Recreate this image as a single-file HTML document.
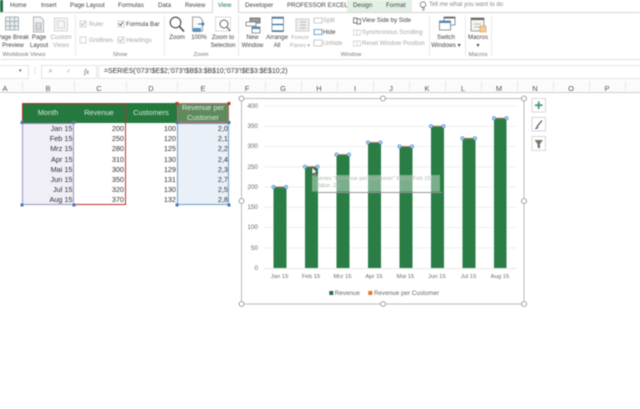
<!DOCTYPE html>
<html><head><meta charset="utf-8">
<style>
html,body{margin:0;padding:0;background:#fff}
#p{position:relative;width:640px;height:409px;overflow:hidden;background:#fff;font-family:"Liberation Sans",sans-serif;filter:blur(.45px)}
.t{position:absolute;white-space:nowrap;font-size:6.1px;line-height:8px;color:#444}
.c{transform:translateX(-50%);text-align:center}
.r{transform:translateX(-100%);text-align:right}
.g{color:#a8a8a8}
.b{position:absolute}
.tab{font-size:6.2px;line-height:9px;top:1px;color:#444}
.h{font-size:7.5px;line-height:9px;color:#555;top:83.5px}
.w{color:#d5ead9;font-size:7.4px;line-height:9px}
.d{font-size:7.3px;line-height:9px;color:#333}
.y{font-size:6.4px;line-height:9px;color:#6a6a6a}
.x{font-size:5.9px;line-height:9px;color:#6a6a6a;top:272.5px}
.l{font-size:5.8px;color:#777;line-height:9px;top:51px}
.o{line-height:9px}
</style></head><body><div id="p">
<div class="b" style="left:0;top:0;width:3px;height:13px;background:#217346"></div>
<div class="b" style="left:0;top:12px;width:640px;height:1px;background:#d4d4d4"></div>
<div class="b" style="left:212px;top:0;width:25px;height:13px;background:#fff;border:1px solid #d4d4d4;border-top:0;border-bottom:0"></div>
<div class="b" style="left:347px;top:0;width:65px;height:12px;background:#e3f0e5"></div>
<span class="t tab" style="left:10px">Home</span><span class="t tab" style="left:41px">Insert</span><span class="t tab" style="left:70px">Page Layout</span><span class="t tab" style="left:118px">Formulas</span><span class="t tab" style="left:158px">Data</span><span class="t tab" style="left:185px">Review</span><span class="t tab" style="left:218px;color:#217346">View</span><span class="t tab" style="left:245px">Developer</span><span class="t tab" style="left:287px">PROFESSOR EXCEL</span><span class="t tab" style="left:353px">Design</span><span class="t tab" style="left:386px">Format</span><span class="t tab g" style="left:429px;color:#888;font-size:6px">Tell me what you want to do</span>
<svg class="b" style="left:419px;top:1px" width="8" height="10"><circle cx="4" cy="3.6" r="2.8" fill="none" stroke="#777" stroke-width=".8"/><path d="M3 7h2v2H3" fill="none" stroke="#777" stroke-width=".8"/></svg>

<svg class="b" style="left:0;top:13px" width="640" height="47" fill="none">
<g stroke="#9aa3a8" stroke-width=".8"><path d="M5.500 4h13v13h-13zM10 4v13M14.500 4v13M5.500 8.500h13M5.500 13h13" fill="#e8eef0"/>
<path d="M33.500 4h7l3 3v12h-10z" fill="#f2f2f2"/><path d="M36 10h5v7h-5zM36 12.500h5M36 15h5"/>
<g stroke="#ccc"><path d="M54.500 5h13v13h-13z" fill="#f5f5f5"/><path d="M57.500 8h7v7h-7z"/></g></g>
<path d="M80 8h6v6h-6zM80 24h6v6h-6zM118 8h6v6h-6zM118 24h6v6h-6z" stroke="#c8c8c8" stroke-width=".8"/>
<path d="M119 10.500l1.500 2 2.500-3.500" stroke="#555" stroke-width=".9"/>
<path d="M81 10.500l1.500 2 2.500-3.500M119 26.500l1.500 2 2.500-3.500" stroke="#aaa" stroke-width=".8"/>
<circle cx="175.500" cy="9.500" r="5.300" stroke="#444" stroke-width="1.100"/><path d="M179.500 13.500l4.500 5" stroke="#444" stroke-width="1.500"/>
<path d="M192.500 4h7l3 3v11h-10z" stroke="#888" stroke-width=".8" fill="#fafafa"/><path d="M198 11h6M202 9l2 2-2 2" stroke="#2a74b8" stroke-width="1"/><path d="M193 15h8v4h-8z" fill="#5a93c4"/>
<path d="M215.500 4h15v14h-15z" stroke="#aaa" stroke-width=".7" stroke-dasharray="1.500 1"/><circle cx="224" cy="11" r="4" stroke="#666"/><path d="M227 14l3 4" stroke="#666" stroke-width="1.200"/>
<path d="M250 5h10v5h-10z" stroke="#666" stroke-width=".8" fill="#555" fill-opacity=".6"/><path d="M246 9h10v4h-10z" stroke="#777" stroke-width=".8" fill="#fff"/><path d="M252 14h8v6h-8z" stroke="#777" stroke-width=".8" fill="#fff"/><path d="M252 14h8v2h-8z" fill="#4a8bc0"/>
<path d="M272 4h11.500v14.500h-11.500z" stroke="#888" stroke-width=".8" fill="#fff"/><path d="M272 5h11.500M272 11.500h11.500M272 18h11.500" stroke="#2e6ea6" stroke-width="1.200"/>
<path d="M296 6h13v12h-13z" stroke="#ccc" fill="#eee"/><path d="M300 9h6M300 12h6M300 15h6" stroke="#bbb"/>
<path d="M314 5h8v5h-8z" stroke="#bbb" stroke-width=".8"/><path d="M314 16.500h8v5h-8z" stroke="#4a8bc0" stroke-width=".8"/><path d="M314 27h8v6h-8z" stroke="#bbb" stroke-width=".8"/>
<path d="M353.500 5h3.500v5h-3.500zM357 6h3.500v5H357z" stroke="#555" stroke-width=".7"/><path d="M353.500 17h3.500v5h-3.500zM357 17h3.500v5H357z" stroke="#ccc" stroke-width=".7"/><path d="M353.500 28h3.500v5h-3.500zM357 28h3.500v5H357z" stroke="#ccc" stroke-width=".7"/>
<path d="M444 4h11v8h-11z" stroke="#777" stroke-width=".8" fill="#fff"/><path d="M444 4h11v1.500h-11z" fill="#666"/><path d="M439.500 8h11v9h-11z" stroke="#777" stroke-width=".8" fill="#fff"/><path d="M439.500 8h11v2h-11z" fill="#4a8bc0"/>
<path d="M471 5h13v13h-13z" stroke="#888" stroke-width=".8" fill="#f7f4ef"/><path d="M471 5h13v2h-13z" fill="#666"/><path d="M474 11h7M474 14h6" stroke="#bbb"/><path d="M480 13h6v6h-6z" fill="#f3cc9c" stroke="#d98c3f" stroke-width=".6"/>
<path d="M75.500 2v41M164.500 2v41M238.500 2v41M429.500 2v41M465.500 2v41M491.500 2v41" stroke="#e4e4e4" stroke-width=".8"/>
</svg>
<div class="b" style="left:0;top:59px;width:640px;height:1px;background:#e2e2e2"></div>

<span class="t c" style="left:13px;top:34px">Page Break<br>Preview</span><span class="t c" style="left:39px;top:34px">Page<br>Layout</span><span class="t c g" style="left:61px;top:34px">Custom<br>Views</span>
<span class="t c l" style="left:24px">Workbook Views</span>
<span class="t g o" style="left:89px;top:20px">Ruler</span><span class="t o" style="left:126px;top:20px">Formula Bar</span><span class="t g o" style="left:89px;top:36px">Gridlines</span><span class="t g o" style="left:126px;top:36px">Headings</span>
<span class="t c l" style="left:120px">Show</span>
<span class="t c" style="left:177px;top:34px">Zoom</span><span class="t c" style="left:199px;top:34px">100%</span><span class="t c" style="left:223px;top:34px">Zoom to<br>Selection</span>
<span class="t c l" style="left:201px">Zoom</span>
<span class="t c" style="left:252.500px;top:34px">New<br>Window</span><span class="t c" style="left:277px;top:34px">Arrange<br>All</span><span class="t c g" style="left:300px;top:34px;font-size:5.6px">Freeze<br>Panes ▾</span>
<span class="t g o" style="left:323px;top:16px">Split</span><span class="t o" style="left:323px;top:28px">Hide</span><span class="t g o" style="left:323px;top:39px">Unhide</span>
<span class="t o" style="left:362px;top:16px">View Side by Side</span><span class="t g o" style="left:362px;top:28px">Synchronous Scrolling</span><span class="t g o" style="left:362px;top:39px">Reset Window Position</span>
<span class="t c l" style="left:351px">Window</span>
<span class="t c" style="left:446px;top:34px">Switch<br>Windows ▾</span><span class="t c" style="left:478px;top:34px">Macros<br>▾</span><span class="t c l" style="left:478px">Macros</span>

<div class="b" style="left:0;top:65px;width:28px;height:12px;border:1px solid #e3e3e3;border-left:0"></div>
<span class="t" style="left:19px;top:67px;font-size:5px;color:#555">▾</span>
<span class="t" style="left:32px;top:67px;color:#aaa">⋮</span>
<div class="b" style="left:41px;top:65px;width:54px;height:12px;border:1px solid #e3e3e3"></div>
<span class="t" style="left:48px;top:67.500px;color:#aaa">✕</span><span class="t" style="left:66px;top:67.500px;color:#aaa">✓</span><span class="t" style="left:84px;top:67.500px;color:#555;font-size:7px;font-family:'Liberation Serif',serif;font-style:italic">fx</span>
<div class="b" style="left:98px;top:65px;width:541px;height:12px;border:1px solid #e3e3e3;border-right:0"></div>
<span class="t" style="left:104px;top:67.500px;font-size:6.9px;color:#333">=SERIES('073'!$E$2;'073'!$B$3:$B$10;'073'!$E$3:$E$10;2)</span>

<div class="b" style="left:0;top:80px;width:640px;height:12.500px;background:#fbfbfb;border-bottom:1.500px solid #d0d0d0;box-sizing:border-box"></div>
<svg class="b" style="left:0;top:80px" width="640" height="12"><path d="M22.500 1v10M74.500 1v10M126.500 1v10M177.500 1v10M229.500 1v10M265.500 1v10M301.500 1v10M337.500 1v10M373.500 1v10M409.500 1v10M445.500 1v10M481.500 1v10M517.500 1v10M553.500 1v10M589.500 1v10M625.500 1v10" stroke="#e6e6e6"/></svg>
<span class="t c h" style="left:5px">A</span><span class="t c h" style="left:48px">B</span><span class="t c h" style="left:99px">C</span><span class="t c h" style="left:151px">D</span><span class="t c h" style="left:203px">E</span><span class="t c h" style="left:247px">F</span><span class="t c h" style="left:283px">G</span><span class="t c h" style="left:319px">H</span><span class="t c h" style="left:355px">I</span><span class="t c h" style="left:391px">J</span><span class="t c h" style="left:427px">K</span><span class="t c h" style="left:463px">L</span><span class="t c h" style="left:499px">M</span><span class="t c h" style="left:535px">N</span><span class="t c h" style="left:571px">O</span><span class="t c h" style="left:607px">P</span>

<div class="b" style="left:22px;top:103px;width:207px;height:19.500px;background:#25793f"></div>
<div class="b" style="left:22px;top:123px;width:52px;height:82px;background:#f0eef7"></div>
<div class="b" style="left:177px;top:123px;width:52px;height:82px;background:#e9f0f8"></div>
<div class="b" style="left:177px;top:103px;width:52px;height:19.500px;background:#5f8a5e"></div>
<div class="b" style="left:22px;top:103px;width:103.500px;height:102px;border:1px solid #b8342e;box-sizing:border-box"></div>
<div class="b" style="left:177px;top:103px;width:52px;height:20px;border:1px solid #b56a66;box-sizing:border-box"></div>
<div class="b" style="left:22px;top:122.500px;width:52px;height:82.500px;border:1.200px solid #9d93c2;box-sizing:border-box"></div>
<div class="b" style="left:177px;top:122.500px;width:52px;height:82.500px;border:1.200px solid #6d9dcc;box-sizing:border-box"></div>
<svg class="b" style="left:0;top:0" width="240" height="215"><g fill="#4a78b8"><rect x="20.500" y="121" width="3" height="3"/><rect x="72.500" y="121" width="3" height="3" fill="#7a70a8"/><rect x="20.500" y="203.500" width="3" height="3"/><rect x="72.500" y="203.500" width="3" height="3"/><rect x="175.500" y="121" width="3" height="3"/><rect x="227.500" y="121" width="3" height="3"/><rect x="175.500" y="203.500" width="3" height="3"/><rect x="227.500" y="203.500" width="3" height="3"/></g><g fill="#b8342e"><rect x="175.500" y="102" width="3" height="3"/><rect x="227.500" y="102" width="3" height="3"/></g></svg>
<span class="t c w" style="left:48px;top:108px">Month</span><span class="t c w" style="left:99px;top:108px">Revenue</span><span class="t c w" style="left:151px;top:108px">Customers</span><span class="t c w" style="left:203px;top:103px;line-height:10px">Revenue per<br>Customer</span>

<span class="t r d" style="left:72.500px;top:124px">Jan 15</span><span class="t r d" style="left:124px;top:124px">200</span><span class="t r d" style="left:176px;top:124px">100</span><span class="t r d" style="left:228px;top:124px">2,0</span>
<span class="t r d" style="left:72.500px;top:134px">Feb 15</span><span class="t r d" style="left:124px;top:134px">250</span><span class="t r d" style="left:176px;top:134px">120</span><span class="t r d" style="left:228px;top:134px">2,1</span>
<span class="t r d" style="left:72.500px;top:144.300px">Mrz 15</span><span class="t r d" style="left:124px;top:144.300px">280</span><span class="t r d" style="left:176px;top:144.300px">125</span><span class="t r d" style="left:228px;top:144.300px">2,2</span>
<span class="t r d" style="left:72.500px;top:154.500px">Apr 15</span><span class="t r d" style="left:124px;top:154.500px">310</span><span class="t r d" style="left:176px;top:154.500px">130</span><span class="t r d" style="left:228px;top:154.500px">2,4</span>
<span class="t r d" style="left:72.500px;top:164.700px">Mai 15</span><span class="t r d" style="left:124px;top:164.700px">300</span><span class="t r d" style="left:176px;top:164.700px">129</span><span class="t r d" style="left:228px;top:164.700px">2,3</span>
<span class="t r d" style="left:72.500px;top:175px">Jun 15</span><span class="t r d" style="left:124px;top:175px">350</span><span class="t r d" style="left:176px;top:175px">131</span><span class="t r d" style="left:228px;top:175px">2,7</span>
<span class="t r d" style="left:72.500px;top:185px">Jul 15</span><span class="t r d" style="left:124px;top:185px">320</span><span class="t r d" style="left:176px;top:185px">130</span><span class="t r d" style="left:228px;top:185px">2,5</span>
<span class="t r d" style="left:72.500px;top:195px">Aug 15</span><span class="t r d" style="left:124px;top:195px">370</span><span class="t r d" style="left:176px;top:195px">132</span><span class="t r d" style="left:228px;top:195px">2,8</span>

<svg class="b" style="left:0;top:0" width="640" height="409" fill="none">
<g stroke="#ececec" stroke-width=".8"><path d="M264 106h252M264 126.300h252M264 146.500h252M264 166.800h252M264 187h252M264 207.300h252M264 227.500h252M264 247.800h252"/></g>
<path d="M264 268.500h252" stroke="#dcdcdc" stroke-width=".8"/>
<g fill="#2a7d44"><rect x="273.500" y="187" width="13" height="81"/><rect x="305" y="166.800" width="13" height="101.200"/><rect x="336.500" y="154.600" width="13" height="113.400"/><rect x="368" y="142.500" width="13" height="125.500"/><rect x="399.500" y="146.500" width="13" height="121.500"/><rect x="431" y="126.300" width="13" height="141.700"/><rect x="462.500" y="138.400" width="13" height="129.600"/><rect x="494" y="118.200" width="12.500" height="149.800"/></g>
<g stroke="#a97a58" stroke-width="1"><path d="M274 187h12M305.500 166.800h12M337 154.600h12M368.500 142.500h12M400 146.500h12M431.500 126.300h12M463 138.400h12M494.500 118.200h12"/></g>
<g stroke="#5b9bd5" stroke-width="1" fill="#dbe8f5"><circle cx="273.500" cy="187" r="1.500"/><circle cx="286" cy="187" r="1.500"/><circle cx="305" cy="166.800" r="1.500"/><circle cx="317.500" cy="166.800" r="1.500"/><circle cx="336.500" cy="154.600" r="1.500"/><circle cx="349" cy="154.600" r="1.500"/><circle cx="368" cy="142.500" r="1.500"/><circle cx="380.500" cy="142.500" r="1.500"/><circle cx="399.500" cy="146.500" r="1.500"/><circle cx="412" cy="146.500" r="1.500"/><circle cx="431" cy="126.300" r="1.500"/><circle cx="443.500" cy="126.300" r="1.500"/><circle cx="462.500" cy="138.400" r="1.500"/><circle cx="475" cy="138.400" r="1.500"/><circle cx="494" cy="118.200" r="1.500"/><circle cx="506.500" cy="118.200" r="1.500"/></g>
<rect x="312" y="175" width="128" height="16.500" fill="#fff" fill-opacity=".38"/>
<path d="M317 192.500h125" stroke="#999" stroke-width="1"/>
<path d="M312 167l0 8 2-2 1.500 3 1-.5-1.500-3h2.500z" fill="#fff" stroke="#444" stroke-width=".6"/>
<rect x="241.500" y="98.500" width="282.500" height="205.500" stroke="#bdbdbd" stroke-width="1"/>
<g stroke="#8c8c8c" stroke-width=".8" fill="#fff"><circle cx="241.500" cy="98.500" r="2.500"/><circle cx="383" cy="98.500" r="2.500"/><circle cx="524" cy="98.500" r="2.500"/><circle cx="241.500" cy="201" r="2.500"/><circle cx="524" cy="201" r="2.500"/><circle cx="241.500" cy="304" r="2.500"/><circle cx="383" cy="304" r="2.500"/><circle cx="524" cy="304" r="2.500"/></g>
<g stroke="#d8d8d8" fill="#fff"><rect x="532" y="98.500" width="13.500" height="13.500"/><rect x="532" y="117.500" width="13.500" height="13.500"/><rect x="532" y="136.500" width="13.500" height="14"/></g>
<path d="M538.700 101.500v7.500M535 105.200h7.500" stroke="#4d9a78" stroke-width="1.800"/>
<path d="M542 120.500l-5 6" stroke="#555" stroke-width="1.200"/><path d="M535 128.500l2.500-2.500 1 1-1.500 2h-2z" fill="#3f6fb0"/>
<path d="M534.500 140h8.500l-3 4v4.500l-2.500-1v-3.500z" fill="#777"/>
<rect x="329.300" y="291" width="4" height="4" fill="#2a6b40"/>
<rect x="368.300" y="291" width="4" height="4" fill="#e0742a"/>
</svg>
<span class="t" style="left:316px;top:175.500px;font-size:5.6px;color:#a8b8a8;line-height:7.500px">Series "Revenue per Customer" Point "Feb 15"<br>Value: 2,1</span>

<span class="t r y" style="left:258px;top:101.500px">400</span><span class="t r y" style="left:258px;top:122px">350</span><span class="t r y" style="left:258px;top:142px">300</span><span class="t r y" style="left:258px;top:162.500px">250</span><span class="t r y" style="left:258px;top:182.500px">200</span><span class="t r y" style="left:258px;top:203px">150</span><span class="t r y" style="left:258px;top:223px">100</span><span class="t r y" style="left:258px;top:243.500px">50</span><span class="t r y" style="left:258px;top:263.500px">0</span>
<span class="t c x" style="left:279.500px">Jan 15</span><span class="t c x" style="left:311px">Feb 15</span><span class="t c x" style="left:342.500px">Mrz 15</span><span class="t c x" style="left:374px">Apr 15</span><span class="t c x" style="left:405.500px">Mai 15</span><span class="t c x" style="left:437px">Jun 15</span><span class="t c x" style="left:468.500px">Jul 15</span><span class="t c x" style="left:500px">Aug 15</span>
<span class="t" style="left:334.700px;top:288.500px;line-height:9px;font-size:6.3px;color:#6a6a6a">Revenue</span><span class="t" style="left:374px;top:288.500px;line-height:9px;font-size:6.3px;color:#6a6a6a">Revenue per Customer</span>
</div></body></html>
